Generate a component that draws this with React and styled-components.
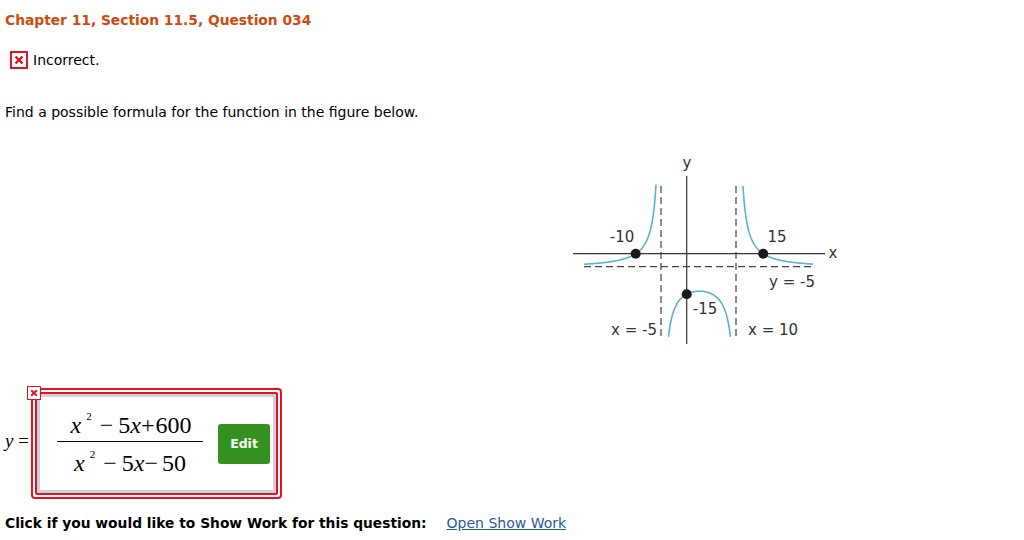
import React from 'react'
import styled, { createGlobalStyle } from 'styled-components'

const GlobalStyle = createGlobalStyle`
  body {
    margin: 0;
    background: #ffffff;
    color: #000000;
    font-family: Verdana, "DejaVu Sans", sans-serif;
    font-size: 14px;
  }
`

const Page = styled.div`
  padding: 12px 5px 0 5px;
  display: flex;
  flex-direction: column;
`

const Title = styled.h1`
  margin: 0;
  font-size: 13.8px;
  line-height: 16px;
  font-weight: bold;
  color: #cf4a0e;
`

const Status = styled.div`
  margin-top: 23px;
  margin-left: 5px;
  display: flex;
  align-items: center;
  gap: 5px;
  line-height: 18px;
`

const XBox = styled.span`
  display: inline-flex;
  align-items: center;
  justify-content: center;
  box-sizing: border-box;
  width: ${({ size }) => size}px;
  height: ${({ size }) => size}px;
  border: ${({ size }) => (size > 15 ? 2 : 1.5)}px solid #e2131f;
  background: #ffffff;
  svg { display: block; }
`

const Prompt = styled.p`
  margin: 35px 0 0 0;
  line-height: 16px;
`

const FigureRow = styled.div`
  margin-top: 21px;
  padding-left: 565px;
  display: flex;
`

const AnswerRow = styled.div`
  margin-top: 23px;
  display: flex;
  align-items: center;
  position: relative;
  padding-top: 4px;
`

const Lhs = styled.span`
  font-family: "Liberation Serif", "Times New Roman", serif;
  font-size: 19px;
  width: 26px;
  margin-top: -6px;
  i { font-style: italic; }
`

const Badge = styled.div`
  position: absolute;
  left: 22px;
  top: 0;
`

const AnswerBox = styled.div`
  border: 2px solid #e2131f;
  border-radius: 4px;
  padding: 2px;
  background: #ffffff;
`

const AnswerInner = styled.div`
  border: 2px solid #e2131f;
  border-radius: 2px;
`

const AnswerContent = styled.div`
  border: 3px solid #cdd3de;
  width: 239px;
  height: 99px;
  box-sizing: border-box;
  display: flex;
  align-items: center;
  padding-left: 17px;
  gap: 15px;
`

const Fraction = styled.div`
  display: flex;
  flex-direction: column;
  align-items: center;
  width: 146px;
  font-family: "Liberation Serif", "Times New Roman", serif;
  font-size: 24px;
  line-height: 28px;
  margin-top: 1px;
`

const Numer = styled.div`
  padding: 0 0 2px 2px;
  white-space: nowrap;
`

const Denom = styled.div`
  border-top: 1px solid #000000;
  width: 100%;
  text-align: center;
  padding-top: 7px;
  white-space: nowrap;
`

const Var = styled.i`
  font-style: italic;
  font-family: "Liberation Serif", "Times New Roman", serif;
`

const Sup = styled.span`
  font-size: 11px;
  line-height: 0;
  position: relative;
  top: -13px;
  margin: 0 8px 0 5px;
`

const Op = styled.span`
  margin-right: ${({ gap }) => gap}px;
`

const EditButton = styled.button`
  width: 52px;
  height: 40px;
  border: 0;
  border-radius: 3px;
  background: #33921f;
  color: #ffffff;
  font-family: Verdana, "DejaVu Sans", sans-serif;
  font-weight: bold;
  font-size: 12.5px;
  padding: 0;
`

const ShowWork = styled.div`
  margin-top: 16px;
  display: flex;
  align-items: center;
  line-height: 16px;
  b { font-weight: bold; font-size: 13.8px; }
`

const Link = styled.a`
  margin-left: 20px;
  color: #1f5c9d;
  text-decoration: underline;
`

const OX = 116.7
const OY = 112.7
const px = (x) => OX + 5.1 * x
const py = (y) => OY - 2.7 * y
const f = (x) => (-5 * (x + 10) * (x - 15)) / ((x + 5) * (x - 10))

function branch(a, b) {
  const pts = []
  const n = 400
  for (let i = 0; i <= n; i++) {
    const x = a + ((b - a) * i) / n
    const Y = py(f(x))
    if (Y >= 43 && Y <= 196) pts.push(`${px(x).toFixed(2)},${Y.toFixed(2)}`)
  }
  return 'M' + pts.join(' L')
}

function Cross({ size, width }) {
  return (
    <svg width={size} height={size} viewBox="0 0 10 10">
      <path d="M1.5 1.5 L8.5 8.5 M8.5 1.5 L1.5 8.5" stroke="#e2131f" strokeWidth={width} />
    </svg>
  )
}

function Graph() {
  const label = { fontFamily: '"DejaVu Sans", Verdana, sans-serif', fontSize: 15, fill: '#333' }
  return (
    <svg width="280" height="220" viewBox="0 0 280 220">
      <g stroke="#333" strokeWidth="1.2">
        <line x1={OX} y1="35" x2={OX} y2="203" />
        <line x1="3" y1={OY} x2="255" y2={OY} />
      </g>
      <g stroke="#444" strokeWidth="1.2" strokeDasharray="7 4" fill="none">
        <line x1="14" y1="125.7" x2="243" y2="125.7" />
        <line x1="91" y1="45" x2="91" y2="197" />
        <line x1="166" y1="45" x2="166" y2="197" />
      </g>
      <g stroke="#5ab3cf" strokeWidth="1.6" fill="none">
        <path d={branch(-20.1, -5.001)} />
        <path d={branch(-4.999, 9.999)} />
        <path d={branch(10.001, 24.8)} />
      </g>
      <g fill="#1a1a1a">
        <circle cx={px(-10)} cy={OY} r="5" />
        <circle cx={px(15)} cy={OY} r="5" />
        <circle cx={OX} cy={py(-15)} r="5" />
      </g>
      <g style={label}>
        <text x="117" y="27" textAnchor="middle">y</text>
        <text x="263" y="117" textAnchor="middle">x</text>
        <text x="52" y="101" textAnchor="middle">-10</text>
        <text x="207" y="101" textAnchor="middle">15</text>
        <text x="222" y="146" textAnchor="middle">y = -5</text>
        <text x="135" y="173" textAnchor="middle">-15</text>
        <text x="87" y="194" textAnchor="end">x = -5</text>
        <text x="178" y="194">x = 10</text>
      </g>
    </svg>
  )
}

export default function App() {
  return (
    <>
      <GlobalStyle />
      <Page>
        <Title>Chapter 11, Section 11.5, Question 034</Title>
        <Status>
          <XBox size={18}><Cross size={10} width={2.4} /></XBox>
          <span>Incorrect.</span>
        </Status>
        <Prompt>Find a possible formula for the function in the figure below.</Prompt>
        <FigureRow>
          <Graph />
        </FigureRow>
        <AnswerRow>
          <Badge>
            <XBox size={14}><Cross size={8} width={2.4} /></XBox>
          </Badge>
          <Lhs><i>y</i> =</Lhs>
          <AnswerBox>
            <AnswerInner>
              <AnswerContent>
                <Fraction>
                  <Numer>
                    <Var>x</Var><Sup>2</Sup><Op gap={5}>−</Op>5<Var>x</Var><Op gap={1}>+</Op>600
                  </Numer>
                  <Denom>
                    <Var>x</Var><Sup>2</Sup><Op gap={5}>−</Op>5<Var>x</Var><Op gap={4}>−</Op>50
                  </Denom>
                </Fraction>
                <EditButton>Edit</EditButton>
              </AnswerContent>
            </AnswerInner>
          </AnswerBox>
        </AnswerRow>
        <ShowWork>
          <b>Click if you would like to Show Work for this question:</b>
          <Link href="#">Open Show Work</Link>
        </ShowWork>
      </Page>
    </>
  )
}
